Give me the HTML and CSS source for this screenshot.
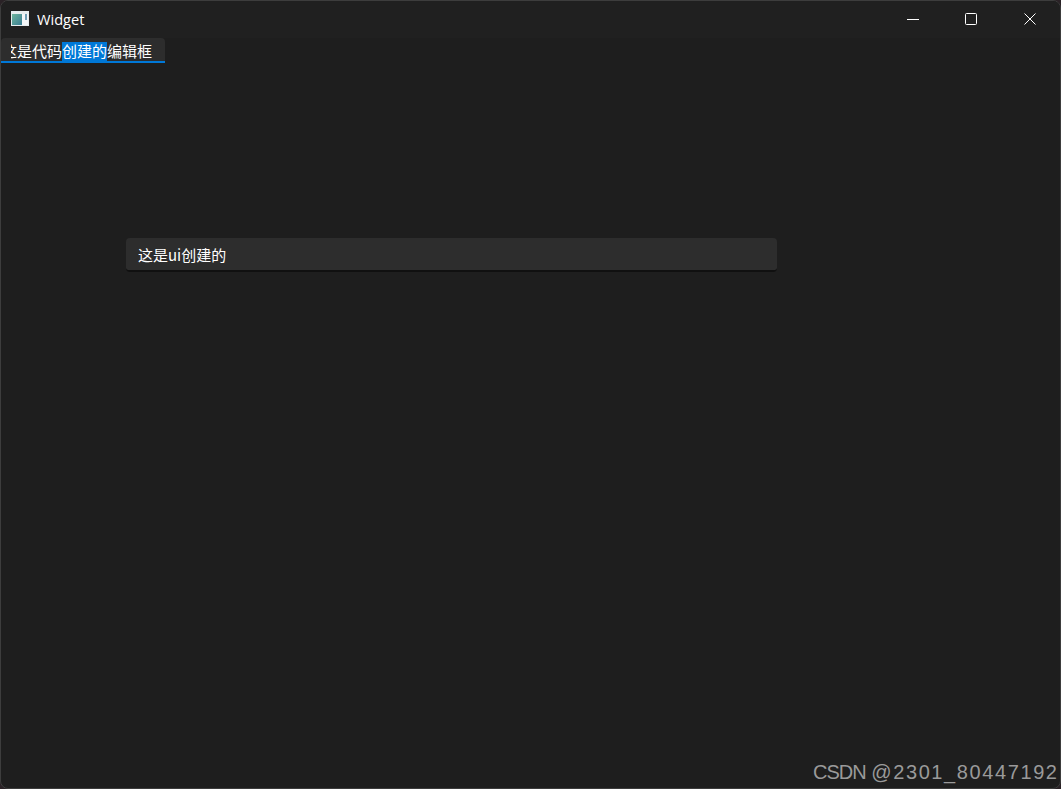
FILE: index.html
```html
<!DOCTYPE html>
<html lang="en">
<head>
    <meta charset="UTF-8">
    <title>Widget</title>
    <link rel="stylesheet" href="styles.css">
</head>
<body>
    <div class="window">
        <!-- Title bar -->
        <div class="title-bar">
            <svg class="app-icon" width="18" height="15" viewBox="0 0 18 15">
                <defs>
                    <linearGradient id="pane" x1="0" y1="0" x2="1" y2="1">
                        <stop offset="0" stop-color="#6db59c"/>
                        <stop offset="1" stop-color="#3a7d94"/>
                    </linearGradient>
                </defs>
                <rect width="18" height="15" fill="#e6ecee"/>
                <rect x="1" y="3" width="10" height="11" fill="url(#pane)"/>
                <rect x="11" y="3" width="6" height="11" fill="#f4f7f8"/>
                <rect x="14" y="3" width="2" height="6" fill="#6f9db5"/>
            </svg>
            <span class="title">Widget</span>
            <div class="controls">
                <button class="control">
                    <svg width="12" height="12" viewBox="0 0 12 12"><path d="M0 6.5H12" stroke="#fff" fill="none"/></svg>
                </button>
                <button class="control">
                    <svg width="12" height="12" viewBox="0 0 12 12"><rect x="0.5" y="0.5" width="11" height="11" rx="1" stroke="#fff" fill="none"/></svg>
                </button>
                <button class="control">
                    <svg width="12" height="12" viewBox="0 0 12 12"><path d="M0.5 0.5L11.5 11.5M11.5 0.5L0.5 11.5" stroke="#fff" fill="none"/></svg>
                </button>
            </div>
        </div>

        <!-- Window content -->
        <div class="content">
            <div class="code-edit">
                <div class="code-text"><span class="scrolled">这是代码<span class="selected">创建的</span>编辑框</span></div>
            </div>
            <div class="ui-edit">这是ui创建的</div>
        </div>
    </div>
    <div class="watermark"><span class="wm-name">CSDN</span> <span class="wm-handle">@2301_80447192</span></div>
</body>
</html>
```

FILE: styles.css
```css
* {
    box-sizing: border-box;
}

html, body {
    height: 100%;
}

body {
    margin: 0;
    background-color: #2a2226;
    color: #ffffff;
    font-family: "Noto Sans CJK SC", sans-serif;
    overflow: hidden;
    position: relative;
}

.window {
    height: 789px;
    background-color: #1e1e1e;
    border: 1px solid #3d3d3d;
    border-radius: 8px;
    display: flex;
    flex-direction: column;
    overflow: hidden;
}

.title-bar {
    height: 37px;
    flex-shrink: 0;
    background-color: #202020;
    display: flex;
    align-items: center;
    padding: 0 0 2px 10px;
}

.app-icon {
    margin-right: 8px;
}

.title {
    font-family: "Open Sans", sans-serif;
    font-size: 14.6px;
    flex: 1;
}

.controls {
    display: flex;
    padding-right: 1px;
}

.control {
    width: 58.5px;
    height: 35px;
    background: none;
    border: none;
    padding: 0;
    display: flex;
    align-items: center;
    justify-content: center;
}

.content {
    flex: 1;
    font-size: 15px;
}

.code-edit {
    width: 164px;
    height: 25px;
    background-color: #2d2d2d;
    border-bottom: 2px solid #0078d7;
    border-radius: 4px 4px 0 0;
    padding: 4px 11px 0 10px;
}

.code-text {
    overflow: hidden;
    white-space: nowrap;
    height: 19px;
    line-height: 18px;
}

.scrolled {
    margin-left: -9px;
    display: inline-block;
}

.selected {
    display: inline-block;
    padding-bottom: 1px;
    background-color: #0078d7;
}

.ui-edit {
    width: 651px;
    height: 34px;
    margin: 175px 0 0 125px;
    padding: 0 12px;
    background-color: #2d2d2d;
    border-bottom: 2px solid #101010;
    border-radius: 4px;
    line-height: 34px;
}

/* CSDN stamp sits on top of the window */
.watermark {
    position: absolute;
    right: 4px;
    bottom: 5px;
    font-family: "Liberation Sans", sans-serif;
    font-size: 20px;
    white-space: nowrap;
    color: #9a9a9a;
}

.wm-name {
    letter-spacing: -1px;
}

.wm-handle {
    letter-spacing: 1.6px;
    margin-right: -1.6px;
}
```
